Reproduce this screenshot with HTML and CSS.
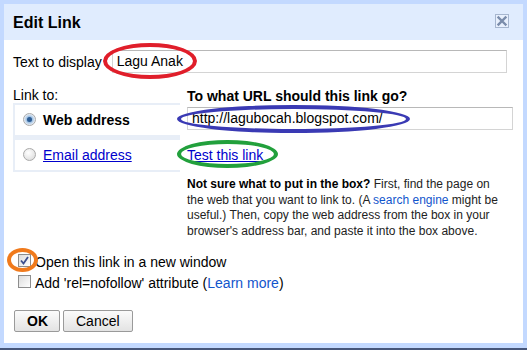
FILE: index.html
```html
<!DOCTYPE html>
<html>
<head>
	<meta charset="utf-8">
	<title>Edit Link</title>
	<link rel="stylesheet" href="styles.css">
</head>
<body>
<div class="frame">
	<div class="dialog">
		<div class="titlebar">
			<span class="title">Edit Link</span>
			<span class="close">
				<svg width="12" height="12" viewBox="0 0 12 12"><path d="M2.5 2.5 L9.5 9.5 M9.5 2.5 L2.5 9.5" stroke="#7a8cab" stroke-width="2.4" stroke-linecap="square"/></svg>
			</span>
		</div>

		<div class="content">
			<div class="row-display">
				<label>Text to display</label>
				<div class="field">Lagu Anak</div>
			</div>

			<div class="link-section">
				<div class="left-col">
					<div class="link-to">Link to:</div>
					<div class="tabs">
						<div class="tab">
							<span class="radio checked"></span>
							<b>Web address</b>
						</div>
						<div class="tab">
							<span class="radio"></span>
							<a href="#" class="email">Email address</a>
						</div>
					</div>
				</div>

				<div class="right-col">
					<div class="question">To what URL should this link go?</div>
					<div class="field url">http://lagubocah.blogspot.com/</div>
					<a href="#" class="test-link">Test this link</a>
					<p class="hint"><b>Not sure what to put in the box?</b> First, find the page on the web that you want to link to. (A <a href="#">search engine</a> might be useful.) Then, copy the web address from the box in your browser's address bar, and paste it into the box above.</p>
				</div>
			</div>

			<div class="check-row first">
				<span class="checkbox checked">
					<svg width="11" height="11" viewBox="0 0 11 11"><path d="M2 5.5 L4.5 8.5 L9 2" stroke="#3b4f8f" stroke-width="1.8" fill="none"/></svg>
				</span>
				<span>Open this link in a new window</span>
			</div>
			<div class="check-row">
				<span class="checkbox"></span>
				<span>Add 'rel=nofollow' attribute (<a href="#">Learn more</a>)</span>
			</div>

			<div class="buttons">
				<button class="button ok">OK</button>
				<button class="button">Cancel</button>
			</div>
		</div>
	</div>

	<!-- penanda -->
	<span class="mark red"></span>
	<span class="mark blue"></span>
	<span class="mark green"></span>
	<span class="mark orange"></span>
</div>
</body>
</html>
```

FILE: styles.css
```css
html, body {
	margin: 0;
	padding: 0;
}

body {
	font-family: "Liberation Sans", Arial, sans-serif;
	font-size: 14px;
	color: #000;
	background-color: #c3d9ff;
}

a {
	color: #1155cc;
	text-decoration: none;
}

.frame {
	position: relative;
	height: 350px;
	box-sizing: border-box;
	padding: 4px 4px 5px 4px;
	border-bottom: 2px solid #46567a;
	display: flex;
}

.dialog {
	flex: 1;
	background-color: #fff;
	display: flex;
	flex-direction: column;
}

.titlebar {
	height: 36px;
	background-color: #e0ecfe;
	display: flex;
	align-items: center;
	justify-content: space-between;
	padding: 0 14px 0 9px;
}

.title {
	font-size: 16px;
	font-weight: bold;
	padding-top: 1px;
}

.close {
	width: 12px;
	height: 12px;
	border: 1px solid #a6b6cf;
	background-color: #e8f0fd;
	display: flex;
	margin-top: -2px;
}

.content {
	padding: 10px 10px 0 9px;
}

.row-display {
	display: flex;
	align-items: center;
	gap: 10px;
	margin-right: 6px;
}

.field {
	flex: 1;
	height: 23px;
	box-sizing: border-box;
	border: 1px solid #d4d4d4;
	border-top-color: #b8b8b8;
	padding: 0 4px;
	line-height: 21px;
	font-size: 14px;
}

.link-section {
	display: flex;
	gap: 7px;
	margin-top: 15px;
}

.left-col {
	width: 167px;
}

.link-to {
	line-height: 15px;
}

.tabs {
	background-color: #e8eef7;
	padding: 2px 0 2px 2px;
	display: flex;
	flex-direction: column;
	gap: 5px;
}

.tab {
	height: 30px;
	background-color: #fff;
	display: flex;
	align-items: center;
	gap: 7px;
	padding-left: 8px;
}

.radio {
	width: 11px;
	height: 11px;
	border-radius: 50%;
	border: 1px solid #a9a9a9;
	background: radial-gradient(circle at 40% 35%, #ffffff, #d6d6d6);
	box-sizing: content-box;
	position: relative;
	margin-top: -2px;
}

.radio.checked::after {
	content: "";
	position: absolute;
	left: 3px;
	top: 3px;
	width: 5px;
	height: 5px;
	border-radius: 50%;
	background: #2e5d94;
}

.radio.checked {
	background: radial-gradient(circle, #8fb7de 30%, #e9eef5 70%);
}

.email {
	color: #0000cc;
	text-decoration: underline;
}

.right-col {
	flex: 1;
}

.question {
	font-weight: bold;
	line-height: 16px;
}

.field.url {
	margin-top: 3px;
}

.test-link {
	display: inline-block;
	margin-top: 17px;
	line-height: 16px;
	color: #0000cc;
	text-decoration: underline;
}

.hint {
	margin: 14px 0 0 0;
	font-size: 12px;
	line-height: 15.5px;
	color: #222;
	padding-right: 14px;
}

.hint b {
	color: #000;
}

.check-row {
	display: flex;
	align-items: center;
	gap: 4px;
	height: 21px;
	padding-left: 5px;
}

.check-row.first {
	margin-top: 12px;
}

.checkbox {
	width: 11px;
	height: 11px;
	border: 1px solid #8d8d8d;
	background: linear-gradient(135deg, #dcdcdc, #ffffff);
	display: flex;
	align-items: center;
	justify-content: center;
	margin-top: -2px;
}

.buttons {
	display: flex;
	gap: 3px;
	margin-top: 17px;
	padding-left: 1px;
}

.button {
	height: 22px;
	font-family: "Liberation Sans", Arial, sans-serif;
	font-size: 14px;
	color: #000;
	border: 1px solid #9a9a9a;
	border-radius: 2px;
	background: linear-gradient(#fbfbfb, #e3e3e3);
	padding: 0 12px;
	cursor: pointer;
}

.button.ok {
	font-weight: bold;
	width: 46px;
}

.mark {
	position: absolute;
	border: 4px solid;
	border-radius: 50%;
	box-sizing: border-box;
}

.mark.red {
	left: 103px;
	top: 43px;
	width: 94px;
	height: 36px;
	border-color: #e01e2a;
}

.mark.blue {
	left: 177px;
	top: 105px;
	width: 233px;
	height: 28px;
	border-color: #3a3ab4;
}

.mark.green {
	left: 177px;
	top: 140px;
	width: 101px;
	height: 28px;
	border-color: #22a03c;
}

.mark.orange {
	left: 7px;
	top: 248px;
	width: 31px;
	height: 24px;
	border-color: #f07a1c;
}
```
